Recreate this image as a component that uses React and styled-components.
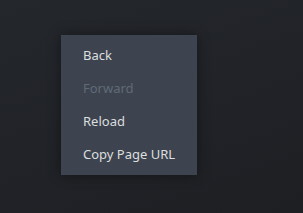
import React from 'react';
import styled, { createGlobalStyle } from 'styled-components';

const GlobalStyle = createGlobalStyle`
  html, body {
    margin: 0;
    padding: 0;
    height: 100%;
  }
  body {
    background: linear-gradient(160deg, #24272c 0%, #1d1f23 100%);
    font-family: "Noto Sans", "Open Sans", sans-serif;
  }
  #root {
    height: 100%;
  }
`;

const Page = styled.div`
  height: 213px;
  padding: 35px 0 0 61px;
  box-sizing: border-box;
`;

const Menu = styled.ul`
  list-style: none;
  margin: 0;
  padding: 3px 0 5px;
  width: 136px;
  background: #3d4450;
  box-shadow: 0 0 12px rgba(0, 0, 0, 0.4);
`;

const Item = styled.li`
  height: 33px;
  display: flex;
  align-items: center;
  padding-left: 22px;
  font-size: 13px;
  color: ${(p) => (p.disabled ? '#616a76' : '#dcdedf')};
  cursor: ${(p) => (p.disabled ? 'default' : 'pointer')};
  white-space: nowrap;
`;

const items = [
  { label: 'Back' },
  { label: 'Forward', disabled: true },
  { label: 'Reload' },
  { label: 'Copy Page URL' },
];

export default function App() {
  return (
    <>
      <GlobalStyle />
      <Page>
        <Menu>
          {items.map((it) => (
            <Item key={it.label} disabled={it.disabled}>
              {it.label}
            </Item>
          ))}
        </Menu>
      </Page>
    </>
  );
}
